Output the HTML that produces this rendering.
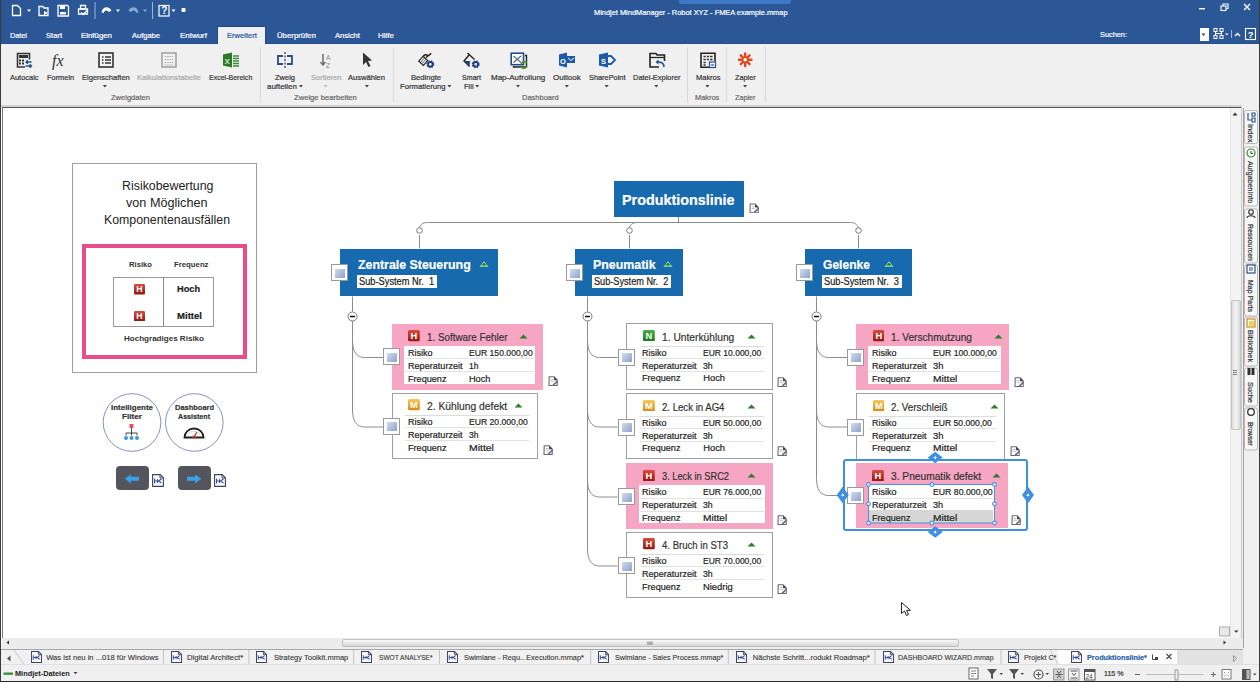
<!DOCTYPE html>
<html><head><meta charset="utf-8">
<style>
*{margin:0;padding:0;box-sizing:border-box}
html,body{width:1260px;height:682px;overflow:hidden;background:#fff}
body{position:relative;font-family:"Liberation Sans",sans-serif;color:#222}
.a{position:absolute}
.t{position:absolute;white-space:pre;line-height:1;transform-origin:0 0;-webkit-text-stroke:0.2px currentColor}
.v{position:absolute;white-space:nowrap;line-height:1;transform-origin:0 0;font-size:7.2px;color:#333;-webkit-text-stroke:0.2px #333}
</style></head><body>
<div class="a" style="left:0;top:0;width:1260px;height:44px;background:#2b5797"></div>
<div class="a" style="left:0;top:0;width:1px;height:682px;background:#3a3a3a;z-index:50"></div>
<div class="a" style="left:1259px;top:0;width:1px;height:682px;background:#3a3a3a;z-index:50"></div>
<div class="a" style="left:679px;top:0;width:112px;height:3.5px;background:#3d78c6;border-radius:0 0 2px 2px"></div>
<svg class="a" style="left:0;top:0" width="200" height="22">
<g fill="none" stroke="#fff" stroke-width="1.3">
<path d="M12.5 5.5h5l3 3v7h-8z"/>
<path d="M39 6.5h4l1 1.5h4v7.5h-9z"/>
<path d="M58 5.5h9.5l1 1v9.5h-10.5z"/>
<path d="M78.5 9h9v5h-9z"/><path d="M80.5 5.5h5v3.5h-5z"/>
</g>
<g fill="#fff">
<path d="M27 9.5h4l-2 2.5z"/>
<rect x="60" y="12" width="6" height="2.5"/>
<rect x="60" y="6" width="5" height="3"/>
<path d="M44 11l4 2-4 2z"/>
<rect x="94.5" y="2" width="1" height="17" fill="#9db5d9"/>
<path d="M101.5 12.5c1-6 7-7 10-2l-2.5 1.5c-2-2.5-4.5-2-5.5 1z"/>
<path d="M116 9.5h4l-2 2.5z"/>
<path d="M138.5 12.5c-1-6-7-7-10-2l2.5 1.5c2-2.5 4.5-2 5.5 1z" fill="#8aa7d6"/>
<path d="M143 9.5h4l-2 2.5z" fill="#8aa7d6"/>
<rect x="152" y="2" width="1" height="17" fill="#9db5d9"/>
<path d="M171.5 9.5h4l-2 2.5z"/>
<rect x="181.5" y="8" width="4" height="4" rx="1"/>
</g>
<path d="M81 12.5l2 2 4-4" stroke="#fff" stroke-width="1.3" fill="none"/>
<rect x="159" y="5.5" width="10" height="10.5" fill="none" stroke="#fff" stroke-width="1.2"/>
<text x="161.3" y="14.3" font-family="Liberation Sans" font-weight="bold" font-size="10" fill="#fff">?</text>
</svg>
<svg class="a" style="left:1190px;top:0" width="70" height="22">
<rect x="9" y="8" width="6" height="1.4" fill="#fff"/>
<g fill="none" stroke="#fff" stroke-width="1.1"><rect x="31" y="6" width="5" height="4.5"/><path d="M33 6v-2h5v4.5h-2"/>
<path d="M54 4l6 6M60 4l-6 6" stroke-width="1.4"/></g>
</svg>
<div class="a" style="left:0;top:42.5px;width:1260px;height:1.5px;background:#23508e"></div>
<div class="a" style="left:217px;top:25.5px;width:49px;height:19px;background:#f0f0f0;border:1px solid #1e4a88;border-bottom:none"></div>
<div class="a" style="left:1200px;top:28px;width:9px;height:13px;background:#fff"></div>
<svg class="a" style="left:1198px;top:24px" width="62" height="20">
<path d="M3.5 9.5h4l-2 2.5z" fill="#444"/>
<g fill="none" stroke="#fff" stroke-width="1"><rect x="16" y="4.5" width="3" height="3"/><rect x="22" y="4.5" width="3" height="3"/><rect x="16" y="11.5" width="3" height="3"/><rect x="22" y="11.5" width="3" height="3"/><path d="M17.5 7.5v4M23.5 7.5v4M17.5 9.5h6"/></g>
<path d="M27 9.5h3.5l-1.75 2z" fill="#fff"/>
<rect x="33" y="6" width="1" height="8" fill="#9db5d9"/>
<path d="M37 12l2.5-2.5 2.5 2.5" stroke="#fff" stroke-width="1.4" fill="none"/>
<rect x="47.5" y="4.5" width="10" height="11" fill="none" stroke="#fff" stroke-width="1.1"/>
<text x="49.8" y="13.5" font-family="Liberation Sans" font-weight="bold" font-size="9.5" fill="#fff">?</text>
</svg>

<div class="t" style="left:594.00px;top:8.90px;font-size:7.80px;color:#fff;transform:scaleX(0.9502);">Mindjet MindManager - Robot XYZ - FMEA example.mmap</div>
<div class="t" style="left:10.00px;top:31.57px;font-size:7.60px;color:#fff;transform:scaleX(0.9582);">Datei</div>
<div class="t" style="left:46.00px;top:31.57px;font-size:7.60px;color:#fff;">Start</div>
<div class="t" style="left:81.00px;top:31.57px;font-size:7.60px;color:#fff;transform:scaleX(1.0332);">Einfügen</div>
<div class="t" style="left:132.00px;top:31.57px;font-size:7.60px;color:#fff;transform:scaleX(0.9889);">Aufgabe</div>
<div class="t" style="left:180.00px;top:31.57px;font-size:7.60px;color:#fff;transform:scaleX(1.0479);">Entwurf</div>
<div class="t" style="left:277.00px;top:31.57px;font-size:7.60px;color:#fff;transform:scaleX(1.0257);">Überprüfen</div>
<div class="t" style="left:335.00px;top:31.57px;font-size:7.60px;color:#fff;">Ansicht</div>
<div class="t" style="left:378.00px;top:31.57px;font-size:7.60px;color:#fff;transform:scaleX(1.0524);">Hilfe</div>
<div class="t" style="left:227.00px;top:31.57px;font-size:7.60px;color:#2b5797;">Erweitert</div>
<div class="t" style="left:1100.00px;top:30.57px;font-size:7.60px;color:#fff;transform:scaleX(0.9682);">Suchen:</div>
<div class="a" style="left:0;top:44px;width:1260px;height:61px;background:#f0f0f0"></div>
<div class="a" style="left:0;top:105px;width:1260px;height:2px;background:#d2d2d2"></div>

<div class="a" style="left:259.5px;top:47px;width:1px;height:56px;background:#dadada"></div>
<div class="a" style="left:392.5px;top:47px;width:1px;height:56px;background:#dadada"></div>
<div class="a" style="left:687px;top:47px;width:1px;height:56px;background:#dadada"></div>
<div class="a" style="left:725.5px;top:47px;width:1px;height:56px;background:#dadada"></div>
<div class="a" style="left:764.5px;top:47px;width:1px;height:56px;background:#dadada"></div>
<div class="t" style="left:10.00px;top:74.20px;font-size:7.80px;color:#333;transform:scaleX(0.9527);">Autocalc</div>
<div class="t" style="left:46.80px;top:74.20px;font-size:7.80px;color:#333;transform:scaleX(0.9508);">Formeln</div>
<div class="t" style="left:81.60px;top:74.20px;font-size:7.80px;color:#333;transform:scaleX(0.9669);">Eigenschaften</div>
<div class="t" style="left:137.30px;top:74.20px;font-size:7.80px;color:#a8a8a8;transform:scaleX(0.9793);">Kalkulationstabelle</div>
<div class="t" style="left:208.80px;top:74.20px;font-size:7.80px;color:#333;transform:scaleX(0.8999);">Excel-Bereich</div>
<div class="t" style="left:275.00px;top:74.20px;font-size:7.80px;color:#333;transform:scaleX(0.9612);">Zweig</div>
<div class="t" style="left:266.90px;top:82.70px;font-size:7.80px;color:#333;transform:scaleX(1.0105);">aufteilen</div>
<div class="t" style="left:310.60px;top:74.20px;font-size:7.80px;color:#a8a8a8;transform:scaleX(0.9605);">Sortieren</div>
<div class="t" style="left:348.30px;top:74.20px;font-size:7.80px;color:#333;transform:scaleX(0.9696);">Auswählen</div>
<div class="t" style="left:410.90px;top:74.20px;font-size:7.80px;color:#333;transform:scaleX(0.9775);">Bedingte</div>
<div class="t" style="left:400.00px;top:82.70px;font-size:7.80px;color:#333;transform:scaleX(0.9831);">Formatierung</div>
<div class="t" style="left:462.20px;top:74.20px;font-size:7.80px;color:#333;transform:scaleX(0.9085);">Smart</div>
<div class="t" style="left:463.70px;top:82.70px;font-size:7.80px;color:#333;transform:scaleX(0.9635);">Fill</div>
<div class="t" style="left:491.10px;top:74.20px;font-size:7.80px;color:#333;transform:scaleX(1.0266);">Map-Aufrollung</div>
<div class="t" style="left:552.90px;top:74.20px;font-size:7.80px;color:#333;transform:scaleX(1.0379);">Outlook</div>
<div class="t" style="left:588.70px;top:74.20px;font-size:7.80px;color:#333;transform:scaleX(0.9458);">SharePoint</div>
<div class="t" style="left:632.90px;top:74.20px;font-size:7.80px;color:#333;transform:scaleX(0.9549);">Datei-Explorer</div>
<div class="t" style="left:695.70px;top:74.20px;font-size:7.80px;color:#333;transform:scaleX(0.9581);">Makros</div>
<div class="t" style="left:735.10px;top:74.20px;font-size:7.80px;color:#333;transform:scaleX(0.9363);">Zapier</div>
<div class="t" style="left:111.00px;top:94.40px;font-size:7.80px;color:#666;transform:scaleX(0.9671);">Zweigdaten</div>
<div class="t" style="left:294.40px;top:94.40px;font-size:7.80px;color:#666;transform:scaleX(0.9786);">Zweige bearbeiten</div>
<div class="t" style="left:521.70px;top:94.40px;font-size:7.80px;color:#666;transform:scaleX(0.9618);">Dashboard</div>
<div class="t" style="left:694.90px;top:94.40px;font-size:7.80px;color:#666;transform:scaleX(0.9464);">Makros</div>
<div class="t" style="left:735.00px;top:94.40px;font-size:7.80px;color:#666;transform:scaleX(0.9272);">Zapier</div>
<svg class="a" style="left:0;top:0" width="800" height="110"><path d="M102.9 85.0h4l-2 2.5z" fill="#444"/><path d="M298.9 85.0h4l-2 2.5z" fill="#444"/><path d="M323.6 85.0h4l-2 2.5z" fill="#bbb"/><path d="M364.9 85.0h4l-2 2.5z" fill="#444"/><path d="M447.4 85.0h4l-2 2.5z" fill="#444"/><path d="M475.2 85.0h4l-2 2.5z" fill="#444"/><path d="M516.0 85.0h4l-2 2.5z" fill="#444"/><path d="M564.8 85.0h4l-2 2.5z" fill="#444"/><path d="M604.6 85.0h4l-2 2.5z" fill="#444"/><path d="M654.3 85.0h4l-2 2.5z" fill="#444"/><path d="M705.4 85.0h4l-2 2.5z" fill="#444"/><path d="M743.1 85.0h4l-2 2.5z" fill="#444"/>
<g fill="none" stroke="#333" stroke-width="1.6">
<path d="M29.5 59.5V53.5H17.5V67h7.5"/>
<rect x="99" y="53" width="14" height="14"/>
<path d="M102 57h1.5M105 57h6M102 60h1.5M105 60h6M102 63h1.5M105 63h6" stroke-width="1.4"/>
</g>
<rect x="19" y="55" width="9" height="3" fill="#333"/>
<g fill="#333"><rect x="19" y="59.5" width="2" height="2"/><rect x="22" y="59.5" width="2" height="2"/><rect x="19" y="62.5" width="2" height="2"/><rect x="22" y="62.5" width="2" height="2"/></g>
<path d="M26 62h5.5M27.8 60.2l-1.8 1.8 1.8 1.8M25.5 66h6M29.7 64.2l1.8 1.8-1.8 1.8" stroke="#1f4f8f" stroke-width="1.4" fill="none"/>
<text x="52" y="66" font-family="Liberation Serif" font-style="italic" font-size="16" fill="#333">fx</text>
<rect x="162" y="53" width="14" height="14" fill="none" stroke="#999" stroke-width="1.4"/>
<path d="M165 56.5h8M165 59.5h8M165 62.5h8M165 65h8" stroke="#aaa" stroke-width="1" stroke-dasharray="1.3 1"/>
<path d="M223 54.5l9-2v15l-9-2z" fill="#2a7a2a"/>
<text x="224.5" y="64" font-family="Liberation Sans" font-weight="bold" font-size="8" fill="#cde8c0">X</text>
<path d="M233 56h6M233 58.5h6M233 61h6M233 63.5h6M233 66h6" stroke="#3a8a3a" stroke-width="1.6"/>
<g fill="none" stroke="#2b4f8a" stroke-width="1.8"><path d="M283 56h-5v8h5M287 56h5v8h-5"/></g>
<path d="M285 52v17" stroke="#333" stroke-width="1.2" stroke-dasharray="2 1.5"/>
<path d="M323 54v11M320.5 62l2.5 3 2.5-3" stroke="#777" stroke-width="1.6" fill="none"/>
<text x="326" y="60" font-family="Liberation Sans" font-size="6.5" fill="#888">A</text>
<text x="326" y="67.5" font-family="Liberation Sans" font-size="6.5" fill="#888">Z</text>
<path d="M363 52.5l9 8-4 .5 2.5 5-2 1-2.5-5-3 3z" fill="#333"/>
<path d="M418.8 61.2l4.3-4.8 4.6 4.2-4.3 4.8z" fill="#fff" stroke="#222" stroke-width="1.2"/>
<path d="M420.3 62.5l4.3-4.6M421.8 63.8l4.3-4.6" stroke="#222" stroke-width=".8"/>
<path d="M423.2 56.6c1-2 2.5-2.4 4.5-1.2M426 57.5l5.2-4.2" stroke="#222" stroke-width="1.5" fill="none"/>
<circle cx="430.3" cy="64.3" r="2.3" fill="none" stroke="#1f3f7f" stroke-width="1.8"/>
<circle cx="430.3" cy="64.3" r="3.4" fill="none" stroke="#1f3f7f" stroke-width="1.2" stroke-dasharray="1.4 1.3"/>
<path d="M467.5 53l7 6.5M469 55l-5 6 5.5 5.5" stroke="#222" stroke-width="1.4" fill="none"/>
<path d="M464.5 61h5.5l-.5 5.5z" fill="#1f3f7f"/>
<circle cx="475.7" cy="64.3" r="2.3" fill="none" stroke="#1f3f7f" stroke-width="1.8"/>
<circle cx="475.7" cy="64.3" r="3.4" fill="none" stroke="#1f3f7f" stroke-width="1.2" stroke-dasharray="1.4 1.3"/>
<path d="M525 55.5h1.5v11.5h-13v-1" stroke="#222" stroke-width="1.4" fill="none"/>
<rect x="511.2" y="53.2" width="12.3" height="11.5" fill="#fff" stroke="#1f4f8f" stroke-width="1.6"/>
<path d="M513.5 56l7.5 6.5M521 56l-7.5 6.5" stroke="#5a6a90" stroke-width="1.2"/>
<path d="M521.2 64.2a3 3 0 0 1 5.5-1.2M526.8 65.8a3 3 0 0 1-5.5 1.2" stroke="#4a9a30" stroke-width="1.6" fill="none"/>
<path d="M559 54.5l8-2v15l-8-2z" fill="#1e5aa8"/>
<rect x="567" y="56" width="8" height="7" fill="#1e5aa8"/>
<text x="560" y="63.5" font-family="Liberation Sans" font-weight="bold" font-size="7.5" fill="#fff">O</text>
<path d="M568 58l3 2.5 3-2.5" stroke="#fff" stroke-width="1" fill="none"/>
<path d="M599 54.5l9-2v15l-9-2z" fill="#1e5aa8"/>
<path d="M608 56h3l4 4-4 4h-3" stroke="#1e5aa8" stroke-width="1.8" fill="none"/>
<text x="601" y="63.5" font-family="Liberation Sans" font-weight="bold" font-size="7.5" fill="#fff">S</text>
<path d="M659 67H650V53.5h6l1 1.5h7.5v6" stroke="#222" stroke-width="1.6" fill="none"/>
<path d="M650 57.5h14.5" stroke="#222" stroke-width="1.3"/>
<path d="M664 67c0-3-2-5-6-5" stroke="#1f4f8f" stroke-width="1.7" fill="none"/>
<path d="M655.5 62l3-2.5v5z" fill="#1f4f8f"/>
<path d="M709 67.2H701V53.3h14v8" stroke="#222" stroke-width="1.6" fill="none"/>
<path d="M703.5 56.5h2.2M706.8 56.5h2.2M710 56.5h2.5M703.5 59.5h2.2M706.8 59.5h2.2M710 59.5h2.5M703.5 62.5h2.2M703.5 65h2.2" stroke="#333" stroke-width="1.4"/>
<rect x="709.5" y="62" width="6" height="5.5" fill="#fff" stroke="#1f4f8f" stroke-width="1.2"/>
<path d="M711 65h3" stroke="#1f4f8f" stroke-width="1.2"/>
<g stroke="#e8441c" stroke-width="2.4" stroke-linecap="round"><path d="M745.2 53.5v12.5M739 59.7h12.5M740.8 55.3l8.8 8.8M749.6 55.3l-8.8 8.8"/></g>
<circle cx="745.2" cy="59.7" r="1.8" fill="#fff"/>
</svg>
<div class="a" style="left:2px;top:107px;width:1239px;height:531px;background:#fff;border-top:1px solid #555;border-left:1px solid #777"></div>

<div class="a" style="left:71.8px;top:162.8px;width:185px;height:210.5px;border:1px solid #a0a0a0;background:#fff"></div>
<div class="a" style="left:82px;top:244px;width:165px;height:115px;border:4.2px solid #e64d8a"></div>
<div class="a" style="left:112.8px;top:276.8px;width:101.5px;height:50px;border:1px solid #999"></div>
<div class="a" style="left:163px;top:277px;width:1px;height:49px;background:#888"></div>

<div class="t" style="left:121.50px;top:180.02px;font-size:12.50px;color:#222;transform:scaleX(0.9902);-webkit-text-stroke:0;">Risikobewertung</div>
<div class="t" style="left:125.50px;top:196.82px;font-size:12.50px;color:#222;transform:scaleX(1.0111);-webkit-text-stroke:0;">von Möglichen</div>
<div class="t" style="left:103.50px;top:213.52px;font-size:12.50px;color:#222;transform:scaleX(0.9853);-webkit-text-stroke:0;">Komponentenausfällen</div>
<div class="t" style="left:128.50px;top:260.73px;font-size:8.00px;color:#333;font-weight:bold;transform:scaleX(0.9580);-webkit-text-stroke:0;">Risiko</div>
<div class="t" style="left:173.50px;top:260.73px;font-size:8.00px;color:#333;font-weight:bold;transform:scaleX(0.9702);-webkit-text-stroke:0;">Frequenz</div>
<div class="t" style="left:176.50px;top:284.88px;font-size:9.00px;color:#222;font-weight:bold;transform:scaleX(1.0222);">Hoch</div>
<div class="t" style="left:176.50px;top:311.88px;font-size:9.00px;color:#222;font-weight:bold;transform:scaleX(1.0639);">Mittel</div>
<div class="t" style="left:123.50px;top:334.73px;font-size:8.00px;color:#333;font-weight:bold;transform:scaleX(1.0054);-webkit-text-stroke:0;">Hochgradiges Risiko</div>
<svg class="a" style="left:0;top:0" width="0" height="0"><defs>
<linearGradient id="gH" x1="0" y1="0" x2="0" y2="1"><stop offset="0" stop-color="#de4a3c"/><stop offset="1" stop-color="#8e1a12"/></linearGradient>
<linearGradient id="gM" x1="0" y1="0" x2="0" y2="1"><stop offset="0" stop-color="#f7c85a"/><stop offset="1" stop-color="#d98a12"/></linearGradient>
<linearGradient id="gN" x1="0" y1="0" x2="0" y2="1"><stop offset="0" stop-color="#46b046"/><stop offset="1" stop-color="#1b7a1b"/></linearGradient>
<linearGradient id="gImg" x1="0" y1="0" x2="1" y2="1"><stop offset="0" stop-color="#c8d4ec"/><stop offset="1" stop-color="#8ea2c8"/></linearGradient>
</defs></svg>
<svg class="a" style="left:134.0px;top:284.0px" width="11.0" height="10.5" viewBox="0 0 12 12" preserveAspectRatio="none"><rect x="0" y="0" width="12" height="12" rx="1.5" fill="url(#gH)"/><text x="6" y="9.6" text-anchor="middle" font-family="Liberation Sans" font-weight="bold" font-size="9.5" fill="#fff">H</text></svg>
<svg class="a" style="left:134.0px;top:310.5px" width="11.0" height="10.5" viewBox="0 0 12 12" preserveAspectRatio="none"><rect x="0" y="0" width="12" height="12" rx="1.5" fill="url(#gH)"/><text x="6" y="9.6" text-anchor="middle" font-family="Liberation Sans" font-weight="bold" font-size="9.5" fill="#fff">H</text></svg>
<svg class="a" style="left:95px;top:385px" width="140" height="115">
<circle cx="37" cy="37.5" r="28.8" fill="#fff" stroke="#8a8fc0" stroke-width="1"/>
<circle cx="99.3" cy="37.5" r="28.8" fill="#fff" stroke="#8a8fc0" stroke-width="1"/>
<rect x="34.5" y="39" width="4" height="4" fill="#e0505a"/>
<path d="M36.5 43v5M31 48h11M31 48v2.5M36.5 48v2.5M42 48v2.5" stroke="#333" stroke-width="0.9" fill="none"/>
<circle cx="31" cy="53" r="2" fill="#3a9ad8"/><circle cx="36.5" cy="53" r="2" fill="#3a9ad8"/><circle cx="42" cy="53" r="2" fill="#3a9ad8"/>
<path d="M89.5 52.5a9.5 9 0 0 1 19 0z" fill="#fff" stroke="#222" stroke-width="1.8"/>
<path d="M99 52l3-5" stroke="#c0392b" stroke-width="1.4"/><circle cx="99" cy="52" r="1.6" fill="#c0392b"/>
<path d="M92.5 50.5a7 6.5 0 0 1 13 0" fill="none" stroke="#ccc" stroke-width="0.8"/>
</svg>
<div class="t" style="left:110.50px;top:403.73px;font-size:8.00px;color:#333;font-weight:bold;transform:scaleX(0.9946);">Intelligente</div>
<div class="t" style="left:121.50px;top:413.23px;font-size:8.00px;color:#333;font-weight:bold;transform:scaleX(1.0226);">Filter</div>
<div class="t" style="left:174.50px;top:403.73px;font-size:8.00px;color:#333;font-weight:bold;transform:scaleX(0.9333);">Dashboard</div>
<div class="t" style="left:178.00px;top:413.23px;font-size:8.00px;color:#333;font-weight:bold;transform:scaleX(0.8886);">Assistent</div>
<div class="a" style="left:116px;top:465.5px;width:32.5px;height:24.5px;background:#54545c;border-radius:4px"></div>
<div class="a" style="left:178px;top:465.5px;width:32.5px;height:24.5px;background:#54545c;border-radius:4px"></div>
<svg class="a" style="left:116px;top:465.5px" width="100" height="25">
<path d="M8.7 12.8l6.3-4.6v2.6h8v4h-8v2.6z" fill="#3aa0e8"/>
<path d="M85.3 12.8l-6.3-4.6v2.6h-8v4h8v2.6z" fill="#3aa0e8"/>
</svg>
<svg class="a" style="left:152.0px;top:473.5px" width="12" height="13" viewBox="0 0 12 13"><path d="M.6 .6h7.6l3.2 3.2v8.6h-10.8z" fill="#fff" stroke="#3c4260" stroke-width="1.1"/><path d="M8 .6v3.4h3.4" fill="none" stroke="#3c4260" stroke-width="1"/><path d="M2.5 4.5v5M2.5 7h3M5.5 5v4M9.5 5l-3 2 3 2" fill="none" stroke="#3a4aa0" stroke-width="1.1"/></svg>
<svg class="a" style="left:214.0px;top:473.5px" width="12" height="13" viewBox="0 0 12 13"><path d="M.6 .6h7.6l3.2 3.2v8.6h-10.8z" fill="#fff" stroke="#3c4260" stroke-width="1.1"/><path d="M8 .6v3.4h3.4" fill="none" stroke="#3c4260" stroke-width="1"/><path d="M2.5 4.5v5M2.5 7h3M5.5 5v4M9.5 5l-3 2 3 2" fill="none" stroke="#3a4aa0" stroke-width="1.1"/></svg>
<svg class="a" style="left:0;top:0" width="1260" height="640">
<g fill="none" stroke="#8c8c8c" stroke-width="1">
<path d="M678.5 217v5.5"/>
<path d="M419.5 228V230M419.5 235v13.5"/>
<path d="M427.5 222.5h423c5 0 8 3 8 7"/>
<path d="M427.5 222.5c-5 0-8 3-8 5.5"/>
<path d="M629.5 228v2M629.5 235v13.5"/>
<path d="M637 222.5c-5 0-7.5 3-7.5 5.5"/>
<path d="M858.5 235v13.5"/>
<path d="M352.5 296.5v15M352.5 320.5V410.0c0 11 4 17 12 17H383.0M352.5 340.5c0 11 4 17 12 17H383.0"/>
<path d="M587.5 296.5v15M587.5 320.5V549.0c0 11 4 17 12 17H617.6M587.5 340.5c0 11 4 17 12 17H617.6M587.5 410.0c0 11 4 17 12 17H617.6M587.5 480.0c0 11 4 17 12 17H617.6"/>
<path d="M816.5 296.5v15M816.5 320.5V478.5c0 11 4 17 12 17H847.3M816.5 340.5c0 11 4 17 12 17H847.3M816.5 410.0c0 11 4 17 12 17H847.3"/>
</g>
<g fill="#fff" stroke="#777" stroke-width="1">
<circle cx="419.5" cy="230.5" r="2.8"/><circle cx="629.5" cy="230.5" r="2.8"/><circle cx="858.5" cy="230.5" r="2.8"/>
<circle cx="352.5" cy="316.5" r="4.5"/><circle cx="587.5" cy="316.5" r="4.5"/><circle cx="816.5" cy="316.5" r="4.5"/>
</g>
<path d="M350 316.5h5M585 316.5h5M814 316.5h5" stroke="#111" stroke-width="1.4"/>
</svg>
<div class="a" style="left:614px;top:181px;width:130px;height:36px;background:#176aad"></div>
<div class="t" style="left:622.40px;top:191.70px;font-size:15.00px;color:#fff;font-weight:bold;transform:scaleX(0.9565);">Produktionslinie</div>
<svg class="a" style="left:748.5px;top:202.5px" width="11" height="10.5" viewBox="0 0 11 10"><path d="M1.2 .8h5l3 3.2v5.5h-8.2z" fill="#fff" stroke="#6a6a6a" stroke-width="1.1"/><path d="M6 .8l3.5 3.5h-3.5z" fill="#444"/><path d="M2.8 3.5h2.5M2.8 5.3h3" stroke="#aaa" stroke-width=".8"/><path d="M5.2 9.2l4.5-4.3" stroke="#6a7090" stroke-width="1.6"/></svg>
<div class="a" style="left:340.2px;top:248.6px;width:157.8px;height:47.6px;background:#176aad"></div>
<div class="t" style="left:358.00px;top:258.00px;font-size:13.00px;color:#fff;font-weight:bold;transform:scaleX(0.9513);">Zentrale Steuerung</div>
<svg class="a" style="left:478.5px;top:259px" width="11" height="9"><path d="M.5 8L5 2.2 9.5 8z" fill="#b8ecc0"/><path d="M2.2 6.5L5 3.5 7.8 6.5z" fill="#1a7a1a"/><path d="M1.5 7.5h7" stroke="#7cc87c" stroke-width="1"/></svg>
<div class="a" style="left:356.9px;top:275.2px;width:80.2px;height:12.4px;background:#fff"></div>
<div class="t" style="left:358.90px;top:276.74px;font-size:10.00px;color:#222;transform:scaleX(0.9268);">Sub-System Nr.  1</div>
<div class="a" style="left:331.2px;top:264.2px;width:17px;height:17.2px;background:#fff;border:1px solid #999"></div>
<div class="a" style="left:335.2px;top:268.7px;width:10px;height:9px;background:linear-gradient(135deg,#d0dcf0,#8ea2c8)"></div>
<div class="a" style="left:575.2px;top:248.6px;width:107.7px;height:47.6px;background:#176aad"></div>
<div class="t" style="left:593.00px;top:258.00px;font-size:13.00px;color:#fff;font-weight:bold;transform:scaleX(0.9537);">Pneumatik</div>
<svg class="a" style="left:663.0px;top:259px" width="11" height="9"><path d="M.5 8L5 2.2 9.5 8z" fill="#b8ecc0"/><path d="M2.2 6.5L5 3.5 7.8 6.5z" fill="#1a7a1a"/><path d="M1.5 7.5h7" stroke="#7cc87c" stroke-width="1"/></svg>
<div class="a" style="left:591.9px;top:275.2px;width:79.3px;height:12.4px;background:#fff"></div>
<div class="t" style="left:593.90px;top:276.74px;font-size:10.00px;color:#222;transform:scaleX(0.9157);">Sub-System Nr.  2</div>
<div class="a" style="left:566.2px;top:264.2px;width:17px;height:17.2px;background:#fff;border:1px solid #999"></div>
<div class="a" style="left:570.2px;top:268.7px;width:10px;height:9px;background:linear-gradient(135deg,#d0dcf0,#8ea2c8)"></div>
<div class="a" style="left:804.8px;top:248.6px;width:106.8px;height:47.6px;background:#176aad"></div>
<div class="t" style="left:822.60px;top:258.00px;font-size:13.00px;color:#fff;font-weight:bold;transform:scaleX(0.9291);">Gelenke</div>
<svg class="a" style="left:883.5px;top:259px" width="11" height="9"><path d="M.5 8L5 2.2 9.5 8z" fill="#b8ecc0"/><path d="M2.2 6.5L5 3.5 7.8 6.5z" fill="#1a7a1a"/><path d="M1.5 7.5h7" stroke="#7cc87c" stroke-width="1"/></svg>
<div class="a" style="left:821.5px;top:275.2px;width:80.0px;height:12.4px;background:#fff"></div>
<div class="t" style="left:823.50px;top:276.74px;font-size:10.00px;color:#222;transform:scaleX(0.9244);">Sub-System Nr.  3</div>
<div class="a" style="left:795.6px;top:264.2px;width:17px;height:17.2px;background:#fff;border:1px solid #999"></div>
<div class="a" style="left:799.6px;top:268.7px;width:10px;height:9px;background:linear-gradient(135deg,#d0dcf0,#8ea2c8)"></div>
<div class="a" style="left:391.6px;top:323.6px;width:151.4px;height:66.6px;background:#f6a5c2;border:none"></div>
<svg class="a" style="left:408.4px;top:330.4px" width="11.8" height="11.3" viewBox="0 0 12 12" preserveAspectRatio="none"><rect x="0" y="0" width="12" height="12" rx="1.5" fill="url(#gH)"/><text x="6" y="9.6" text-anchor="middle" font-family="Liberation Sans" font-weight="bold" font-size="9.5" fill="#fff">H</text></svg>
<div class="t" style="left:426.80px;top:332.06px;font-size:10.80px;color:#333;transform:scaleX(0.9123);">1. Software Fehler</div>
<svg class="a" style="left:518.5px;top:333.1px" width="9" height="7"><path d="M.5 5.5L4.5 1.5 8.5 5.5z" fill="#2e7d2e"/></svg>
<div class="a" style="left:403.8px;top:345.6px;width:130.9px;height:38.4px;background:#fff"></div>
<div class="a" style="left:404.8px;top:358.4px;width:128.9px;height:1px;background:#e2e2e2"></div>
<div class="a" style="left:404.8px;top:371.2px;width:128.9px;height:1px;background:#e2e2e2"></div>
<div class="t" style="left:407.60px;top:349.03px;font-size:9.30px;color:#222;transform:scaleX(0.9676);">Risiko</div>
<div class="t" style="left:468.60px;top:349.03px;font-size:9.30px;color:#222;transform:scaleX(0.9263);">EUR 150.000,00</div>
<div class="t" style="left:407.60px;top:361.83px;font-size:9.30px;color:#222;transform:scaleX(0.9780);">Reperaturzeit</div>
<div class="t" style="left:468.60px;top:361.83px;font-size:9.30px;color:#222;transform:scaleX(0.9087);">1h</div>
<div class="t" style="left:407.60px;top:374.63px;font-size:9.30px;color:#222;transform:scaleX(0.9799);">Frequenz</div>
<div class="t" style="left:468.60px;top:374.63px;font-size:9.30px;color:#222;transform:scaleX(0.9857);">Hoch</div>
<svg class="a" style="left:547.6px;top:376.4px" width="11" height="10" viewBox="0 0 11 10"><path d="M1.2 .8h5l3 3.2v5.5h-8.2z" fill="#fff" stroke="#6a6a6a" stroke-width="1.1"/><path d="M6 .8l3.5 3.5h-3.5z" fill="#444"/><path d="M2.8 3.5h2.5M2.8 5.3h3" stroke="#aaa" stroke-width=".8"/><path d="M5.2 9.2l4.5-4.3" stroke="#6a7090" stroke-width="1.6"/></svg>
<div class="a" style="left:383.0px;top:348.3px;width:17px;height:17.2px;background:#fff;border:1px solid #999"></div>
<div class="a" style="left:387.0px;top:352.8px;width:10px;height:9px;background:linear-gradient(135deg,#d0dcf0,#8ea2c8)"></div>
<div class="a" style="left:391.6px;top:392.6px;width:146.6px;height:66.8px;background:#fff;border:1px solid #a0a0a0"></div>
<svg class="a" style="left:408.4px;top:399.4px" width="11.8" height="11.3" viewBox="0 0 12 12" preserveAspectRatio="none"><rect x="0" y="0" width="12" height="12" rx="1.5" fill="url(#gM)"/><text x="6" y="9.6" text-anchor="middle" font-family="Liberation Sans" font-weight="bold" font-size="9.5" fill="#fff">M</text></svg>
<div class="t" style="left:426.80px;top:401.06px;font-size:10.80px;color:#333;transform:scaleX(0.9540);">2. Kühlung defekt</div>
<svg class="a" style="left:513.5px;top:402.1px" width="9" height="7"><path d="M.5 5.5L4.5 1.5 8.5 5.5z" fill="#2e7d2e"/></svg>
<div class="a" style="left:404.8px;top:415.1px;width:124.1px;height:1px;background:#ddd"></div>
<div class="a" style="left:404.8px;top:427.4px;width:124.1px;height:1px;background:#e2e2e2"></div>
<div class="a" style="left:404.8px;top:440.2px;width:124.1px;height:1px;background:#e2e2e2"></div>
<div class="t" style="left:407.60px;top:418.03px;font-size:9.30px;color:#222;transform:scaleX(0.9676);">Risiko</div>
<div class="t" style="left:468.60px;top:418.03px;font-size:9.30px;color:#222;transform:scaleX(0.9262);">EUR 20.000,00</div>
<div class="t" style="left:407.60px;top:430.83px;font-size:9.30px;color:#222;transform:scaleX(0.9780);">Reperaturzeit</div>
<div class="t" style="left:468.60px;top:430.83px;font-size:9.30px;color:#222;transform:scaleX(0.9087);">3h</div>
<div class="t" style="left:407.60px;top:443.63px;font-size:9.30px;color:#222;transform:scaleX(0.9799);">Frequenz</div>
<div class="t" style="left:468.60px;top:443.63px;font-size:9.30px;color:#222;transform:scaleX(1.1207);">Mittel</div>
<svg class="a" style="left:543.0px;top:444.8px" width="11" height="10" viewBox="0 0 11 10"><path d="M1.2 .8h5l3 3.2v5.5h-8.2z" fill="#fff" stroke="#6a6a6a" stroke-width="1.1"/><path d="M6 .8l3.5 3.5h-3.5z" fill="#444"/><path d="M2.8 3.5h2.5M2.8 5.3h3" stroke="#aaa" stroke-width=".8"/><path d="M5.2 9.2l4.5-4.3" stroke="#6a7090" stroke-width="1.6"/></svg>
<div class="a" style="left:383.0px;top:417.8px;width:17px;height:17.2px;background:#fff;border:1px solid #999"></div>
<div class="a" style="left:387.0px;top:422.3px;width:10px;height:9px;background:linear-gradient(135deg,#d0dcf0,#8ea2c8)"></div>
<div class="a" style="left:626.3px;top:323.4px;width:146.7px;height:67.1px;background:#fff;border:1px solid #a0a0a0"></div>
<svg class="a" style="left:643.1px;top:330.2px" width="11.8" height="11.3" viewBox="0 0 12 12" preserveAspectRatio="none"><rect x="0" y="0" width="12" height="12" rx="1.5" fill="url(#gN)"/><text x="6" y="9.6" text-anchor="middle" font-family="Liberation Sans" font-weight="bold" font-size="9.5" fill="#fff">N</text></svg>
<div class="t" style="left:661.50px;top:331.86px;font-size:10.80px;color:#333;transform:scaleX(0.9482);">1. Unterkühlung</div>
<svg class="a" style="left:747.0px;top:332.9px" width="9" height="7"><path d="M.5 5.5L4.5 1.5 8.5 5.5z" fill="#2e7d2e"/></svg>
<div class="a" style="left:639.5px;top:345.9px;width:124.2px;height:1px;background:#ddd"></div>
<div class="a" style="left:639.5px;top:358.2px;width:124.2px;height:1px;background:#e2e2e2"></div>
<div class="a" style="left:639.5px;top:371.0px;width:124.2px;height:1px;background:#e2e2e2"></div>
<div class="t" style="left:642.30px;top:348.83px;font-size:9.30px;color:#222;transform:scaleX(0.9676);">Risiko</div>
<div class="t" style="left:703.30px;top:348.83px;font-size:9.30px;color:#222;transform:scaleX(0.9152);">EUR 10.000,00</div>
<div class="t" style="left:642.30px;top:361.63px;font-size:9.30px;color:#222;transform:scaleX(0.9780);">Reperaturzeit</div>
<div class="t" style="left:703.30px;top:361.63px;font-size:9.30px;color:#222;transform:scaleX(0.9377);">3h</div>
<div class="t" style="left:642.30px;top:374.43px;font-size:9.30px;color:#222;transform:scaleX(0.9799);">Frequenz</div>
<div class="t" style="left:703.30px;top:374.43px;font-size:9.30px;color:#222;">Hoch</div>
<svg class="a" style="left:776.9px;top:376.8px" width="11" height="10" viewBox="0 0 11 10"><path d="M1.2 .8h5l3 3.2v5.5h-8.2z" fill="#fff" stroke="#6a6a6a" stroke-width="1.1"/><path d="M6 .8l3.5 3.5h-3.5z" fill="#444"/><path d="M2.8 3.5h2.5M2.8 5.3h3" stroke="#aaa" stroke-width=".8"/><path d="M5.2 9.2l4.5-4.3" stroke="#6a7090" stroke-width="1.6"/></svg>
<div class="a" style="left:617.6px;top:348.5px;width:17px;height:17.2px;background:#fff;border:1px solid #999"></div>
<div class="a" style="left:621.6px;top:353.0px;width:10px;height:9px;background:linear-gradient(135deg,#d0dcf0,#8ea2c8)"></div>
<div class="a" style="left:626.3px;top:393.3px;width:146.7px;height:66.1px;background:#fff;border:1px solid #a0a0a0"></div>
<svg class="a" style="left:643.1px;top:400.1px" width="11.8" height="11.3" viewBox="0 0 12 12" preserveAspectRatio="none"><rect x="0" y="0" width="12" height="12" rx="1.5" fill="url(#gM)"/><text x="6" y="9.6" text-anchor="middle" font-family="Liberation Sans" font-weight="bold" font-size="9.5" fill="#fff">M</text></svg>
<div class="t" style="left:661.50px;top:401.76px;font-size:10.80px;color:#333;transform:scaleX(0.8894);">2. Leck in AG4</div>
<svg class="a" style="left:747.0px;top:402.8px" width="9" height="7"><path d="M.5 5.5L4.5 1.5 8.5 5.5z" fill="#2e7d2e"/></svg>
<div class="a" style="left:639.5px;top:415.8px;width:124.2px;height:1px;background:#ddd"></div>
<div class="a" style="left:639.5px;top:428.1px;width:124.2px;height:1px;background:#e2e2e2"></div>
<div class="a" style="left:639.5px;top:440.9px;width:124.2px;height:1px;background:#e2e2e2"></div>
<div class="t" style="left:642.30px;top:418.73px;font-size:9.30px;color:#222;transform:scaleX(0.9676);">Risiko</div>
<div class="t" style="left:703.30px;top:418.73px;font-size:9.30px;color:#222;transform:scaleX(0.9152);">EUR 50.000,00</div>
<div class="t" style="left:642.30px;top:431.53px;font-size:9.30px;color:#222;transform:scaleX(0.9780);">Reperaturzeit</div>
<div class="t" style="left:703.30px;top:431.53px;font-size:9.30px;color:#222;transform:scaleX(0.9377);">3h</div>
<div class="t" style="left:642.30px;top:444.33px;font-size:9.30px;color:#222;transform:scaleX(0.9799);">Frequenz</div>
<div class="t" style="left:703.30px;top:444.33px;font-size:9.30px;color:#222;">Hoch</div>
<svg class="a" style="left:776.9px;top:445.5px" width="11" height="10" viewBox="0 0 11 10"><path d="M1.2 .8h5l3 3.2v5.5h-8.2z" fill="#fff" stroke="#6a6a6a" stroke-width="1.1"/><path d="M6 .8l3.5 3.5h-3.5z" fill="#444"/><path d="M2.8 3.5h2.5M2.8 5.3h3" stroke="#aaa" stroke-width=".8"/><path d="M5.2 9.2l4.5-4.3" stroke="#6a7090" stroke-width="1.6"/></svg>
<div class="a" style="left:617.6px;top:418.5px;width:17px;height:17.2px;background:#fff;border:1px solid #999"></div>
<div class="a" style="left:621.6px;top:423.0px;width:10px;height:9px;background:linear-gradient(135deg,#d0dcf0,#8ea2c8)"></div>
<div class="a" style="left:626.3px;top:462.9px;width:146.7px;height:66.2px;background:#f6a5c2;border:none"></div>
<svg class="a" style="left:643.1px;top:469.7px" width="11.8" height="11.3" viewBox="0 0 12 12" preserveAspectRatio="none"><rect x="0" y="0" width="12" height="12" rx="1.5" fill="url(#gH)"/><text x="6" y="9.6" text-anchor="middle" font-family="Liberation Sans" font-weight="bold" font-size="9.5" fill="#fff">H</text></svg>
<div class="t" style="left:661.50px;top:471.36px;font-size:10.80px;color:#333;transform:scaleX(0.8586);">3. Leck in SRC2</div>
<svg class="a" style="left:747.0px;top:472.4px" width="9" height="7"><path d="M.5 5.5L4.5 1.5 8.5 5.5z" fill="#2e7d2e"/></svg>
<div class="a" style="left:638.5px;top:484.9px;width:126.2px;height:38.4px;background:#fff"></div>
<div class="a" style="left:639.5px;top:497.7px;width:124.2px;height:1px;background:#e2e2e2"></div>
<div class="a" style="left:639.5px;top:510.5px;width:124.2px;height:1px;background:#e2e2e2"></div>
<div class="t" style="left:642.30px;top:488.33px;font-size:9.30px;color:#222;transform:scaleX(0.9676);">Risiko</div>
<div class="t" style="left:703.30px;top:488.33px;font-size:9.30px;color:#222;transform:scaleX(0.9152);">EUR 76.000,00</div>
<div class="t" style="left:642.30px;top:501.13px;font-size:9.30px;color:#222;transform:scaleX(0.9780);">Reperaturzeit</div>
<div class="t" style="left:703.30px;top:501.13px;font-size:9.30px;color:#222;transform:scaleX(0.9377);">3h</div>
<div class="t" style="left:642.30px;top:513.93px;font-size:9.30px;color:#222;transform:scaleX(0.9799);">Frequenz</div>
<div class="t" style="left:703.30px;top:513.93px;font-size:9.30px;color:#222;transform:scaleX(1.0891);">Mittel</div>
<svg class="a" style="left:776.9px;top:514.5px" width="11" height="10" viewBox="0 0 11 10"><path d="M1.2 .8h5l3 3.2v5.5h-8.2z" fill="#fff" stroke="#6a6a6a" stroke-width="1.1"/><path d="M6 .8l3.5 3.5h-3.5z" fill="#444"/><path d="M2.8 3.5h2.5M2.8 5.3h3" stroke="#aaa" stroke-width=".8"/><path d="M5.2 9.2l4.5-4.3" stroke="#6a7090" stroke-width="1.6"/></svg>
<div class="a" style="left:617.6px;top:488.0px;width:17px;height:17.2px;background:#fff;border:1px solid #999"></div>
<div class="a" style="left:621.6px;top:492.5px;width:10px;height:9px;background:linear-gradient(135deg,#d0dcf0,#8ea2c8)"></div>
<div class="a" style="left:626.3px;top:531.6px;width:146.7px;height:66.7px;background:#fff;border:1px solid #a0a0a0"></div>
<svg class="a" style="left:643.1px;top:538.4px" width="11.8" height="11.3" viewBox="0 0 12 12" preserveAspectRatio="none"><rect x="0" y="0" width="12" height="12" rx="1.5" fill="url(#gH)"/><text x="6" y="9.6" text-anchor="middle" font-family="Liberation Sans" font-weight="bold" font-size="9.5" fill="#fff">H</text></svg>
<div class="t" style="left:661.50px;top:540.06px;font-size:10.80px;color:#333;transform:scaleX(0.8867);">4. Bruch in ST3</div>
<svg class="a" style="left:747.0px;top:541.1px" width="9" height="7"><path d="M.5 5.5L4.5 1.5 8.5 5.5z" fill="#2e7d2e"/></svg>
<div class="a" style="left:639.5px;top:554.1px;width:124.2px;height:1px;background:#ddd"></div>
<div class="a" style="left:639.5px;top:566.4px;width:124.2px;height:1px;background:#e2e2e2"></div>
<div class="a" style="left:639.5px;top:579.2px;width:124.2px;height:1px;background:#e2e2e2"></div>
<div class="t" style="left:642.30px;top:557.03px;font-size:9.30px;color:#222;transform:scaleX(0.9676);">Risiko</div>
<div class="t" style="left:703.30px;top:557.03px;font-size:9.30px;color:#222;transform:scaleX(0.9152);">EUR 70.000,00</div>
<div class="t" style="left:642.30px;top:569.83px;font-size:9.30px;color:#222;transform:scaleX(0.9780);">Reperaturzeit</div>
<div class="t" style="left:703.30px;top:569.83px;font-size:9.30px;color:#222;transform:scaleX(0.9377);">3h</div>
<div class="t" style="left:642.30px;top:582.63px;font-size:9.30px;color:#222;transform:scaleX(0.9799);">Frequenz</div>
<div class="t" style="left:703.30px;top:582.63px;font-size:9.30px;color:#222;transform:scaleX(1.0081);">Niedrig</div>
<svg class="a" style="left:776.9px;top:583.7px" width="11" height="10" viewBox="0 0 11 10"><path d="M1.2 .8h5l3 3.2v5.5h-8.2z" fill="#fff" stroke="#6a6a6a" stroke-width="1.1"/><path d="M6 .8l3.5 3.5h-3.5z" fill="#444"/><path d="M2.8 3.5h2.5M2.8 5.3h3" stroke="#aaa" stroke-width=".8"/><path d="M5.2 9.2l4.5-4.3" stroke="#6a7090" stroke-width="1.6"/></svg>
<div class="a" style="left:617.6px;top:557.0px;width:17px;height:17.2px;background:#fff;border:1px solid #999"></div>
<div class="a" style="left:621.6px;top:561.5px;width:10px;height:9px;background:linear-gradient(135deg,#d0dcf0,#8ea2c8)"></div>
<div class="a" style="left:855.8px;top:323.6px;width:153.7px;height:66.7px;background:#f6a5c2;border:none"></div>
<svg class="a" style="left:872.6px;top:330.4px" width="11.8" height="11.3" viewBox="0 0 12 12" preserveAspectRatio="none"><rect x="0" y="0" width="12" height="12" rx="1.5" fill="url(#gH)"/><text x="6" y="9.6" text-anchor="middle" font-family="Liberation Sans" font-weight="bold" font-size="9.5" fill="#fff">H</text></svg>
<div class="t" style="left:891.00px;top:332.06px;font-size:10.80px;color:#333;transform:scaleX(0.9370);">1. Verschmutzung</div>
<svg class="a" style="left:994.0px;top:333.1px" width="9" height="7"><path d="M.5 5.5L4.5 1.5 8.5 5.5z" fill="#2e7d2e"/></svg>
<div class="a" style="left:868.0px;top:345.6px;width:133.2px;height:38.4px;background:#fff"></div>
<div class="a" style="left:869.0px;top:358.4px;width:131.2px;height:1px;background:#e2e2e2"></div>
<div class="a" style="left:869.0px;top:371.2px;width:131.2px;height:1px;background:#e2e2e2"></div>
<div class="t" style="left:871.80px;top:349.03px;font-size:9.30px;color:#222;transform:scaleX(0.9676);">Risiko</div>
<div class="t" style="left:932.60px;top:349.03px;font-size:9.30px;color:#222;transform:scaleX(0.9293);">EUR 100.000,00</div>
<div class="t" style="left:871.80px;top:361.83px;font-size:9.30px;color:#222;transform:scaleX(0.9780);">Reperaturzeit</div>
<div class="t" style="left:932.60px;top:361.83px;font-size:9.30px;color:#222;transform:scaleX(1.0054);">3h</div>
<div class="t" style="left:871.80px;top:374.63px;font-size:9.30px;color:#222;transform:scaleX(0.9799);">Frequenz</div>
<div class="t" style="left:932.60px;top:374.63px;font-size:9.30px;color:#222;transform:scaleX(1.0981);">Mittel</div>
<svg class="a" style="left:1014.0px;top:376.5px" width="11" height="10" viewBox="0 0 11 10"><path d="M1.2 .8h5l3 3.2v5.5h-8.2z" fill="#fff" stroke="#6a6a6a" stroke-width="1.1"/><path d="M6 .8l3.5 3.5h-3.5z" fill="#444"/><path d="M2.8 3.5h2.5M2.8 5.3h3" stroke="#aaa" stroke-width=".8"/><path d="M5.2 9.2l4.5-4.3" stroke="#6a7090" stroke-width="1.6"/></svg>
<div class="a" style="left:847.3px;top:348.5px;width:17px;height:17.2px;background:#fff;border:1px solid #999"></div>
<div class="a" style="left:851.3px;top:353.0px;width:10px;height:9px;background:linear-gradient(135deg,#d0dcf0,#8ea2c8)"></div>
<div class="a" style="left:855.8px;top:393.3px;width:149.1px;height:66.3px;background:#fff;border:1px solid #a0a0a0"></div>
<svg class="a" style="left:872.6px;top:400.1px" width="11.8" height="11.3" viewBox="0 0 12 12" preserveAspectRatio="none"><rect x="0" y="0" width="12" height="12" rx="1.5" fill="url(#gM)"/><text x="6" y="9.6" text-anchor="middle" font-family="Liberation Sans" font-weight="bold" font-size="9.5" fill="#fff">M</text></svg>
<div class="t" style="left:891.00px;top:401.76px;font-size:10.80px;color:#333;transform:scaleX(0.9051);">2. Verschleiß</div>
<svg class="a" style="left:989.5px;top:402.8px" width="9" height="7"><path d="M.5 5.5L4.5 1.5 8.5 5.5z" fill="#2e7d2e"/></svg>
<div class="a" style="left:869.0px;top:415.8px;width:126.6px;height:1px;background:#ddd"></div>
<div class="a" style="left:869.0px;top:428.1px;width:126.6px;height:1px;background:#e2e2e2"></div>
<div class="a" style="left:869.0px;top:440.9px;width:126.6px;height:1px;background:#e2e2e2"></div>
<div class="t" style="left:871.80px;top:418.73px;font-size:9.30px;color:#222;transform:scaleX(0.9676);">Risiko</div>
<div class="t" style="left:932.60px;top:418.73px;font-size:9.30px;color:#222;transform:scaleX(0.9262);">EUR 50.000,00</div>
<div class="t" style="left:871.80px;top:431.53px;font-size:9.30px;color:#222;transform:scaleX(0.9780);">Reperaturzeit</div>
<div class="t" style="left:932.60px;top:431.53px;font-size:9.30px;color:#222;transform:scaleX(1.0054);">3h</div>
<div class="t" style="left:871.80px;top:444.33px;font-size:9.30px;color:#222;transform:scaleX(0.9799);">Frequenz</div>
<div class="t" style="left:932.60px;top:444.33px;font-size:9.30px;color:#222;transform:scaleX(1.0981);">Mittel</div>
<svg class="a" style="left:1009.5px;top:445.6px" width="11" height="10" viewBox="0 0 11 10"><path d="M1.2 .8h5l3 3.2v5.5h-8.2z" fill="#fff" stroke="#6a6a6a" stroke-width="1.1"/><path d="M6 .8l3.5 3.5h-3.5z" fill="#444"/><path d="M2.8 3.5h2.5M2.8 5.3h3" stroke="#aaa" stroke-width=".8"/><path d="M5.2 9.2l4.5-4.3" stroke="#6a7090" stroke-width="1.6"/></svg>
<div class="a" style="left:847.3px;top:418.5px;width:17px;height:17.2px;background:#fff;border:1px solid #999"></div>
<div class="a" style="left:851.3px;top:423.0px;width:10px;height:9px;background:linear-gradient(135deg,#d0dcf0,#8ea2c8)"></div>
<div class="a" style="left:843.2px;top:458.7px;width:184.4px;height:72.4px;border:2px solid #3d8fe0;border-radius:3px;background:#fff"></div>
<div class="a" style="left:855.6px;top:462.7px;width:152.0px;height:65.7px;background:#f6a5c2;border:none"></div>
<svg class="a" style="left:872.4px;top:469.5px" width="11.8" height="11.3" viewBox="0 0 12 12" preserveAspectRatio="none"><rect x="0" y="0" width="12" height="12" rx="1.5" fill="url(#gH)"/><text x="6" y="9.6" text-anchor="middle" font-family="Liberation Sans" font-weight="bold" font-size="9.5" fill="#fff">H</text></svg>
<div class="t" style="left:890.80px;top:471.16px;font-size:10.80px;color:#333;transform:scaleX(0.9450);">3. Pneumatik defekt</div>
<svg class="a" style="left:992.0px;top:472.2px" width="9" height="7"><path d="M.5 5.5L4.5 1.5 8.5 5.5z" fill="#2e7d2e"/></svg>
<div class="a" style="left:867.8px;top:484.7px;width:126.5px;height:38.4px;background:#fff"></div>
<div class="a" style="left:868.8px;top:497.5px;width:124.5px;height:1px;background:#e2e2e2"></div>
<div class="a" style="left:868.8px;top:510.3px;width:124.5px;height:1px;background:#e2e2e2"></div>
<div class="a" style="left:868.8px;top:510.3px;width:124.5px;height:13px;background:#d6d6d6"></div>
<div class="t" style="left:871.60px;top:488.13px;font-size:9.30px;color:#222;transform:scaleX(0.9676);">Risiko</div>
<div class="t" style="left:932.80px;top:488.13px;font-size:9.30px;color:#222;transform:scaleX(0.9388);">EUR 80.000,00</div>
<div class="t" style="left:871.60px;top:500.93px;font-size:9.30px;color:#222;transform:scaleX(0.9780);">Reperaturzeit</div>
<div class="t" style="left:932.80px;top:500.93px;font-size:9.30px;color:#222;transform:scaleX(0.9860);">3h</div>
<div class="t" style="left:871.60px;top:513.73px;font-size:9.30px;color:#222;transform:scaleX(0.9799);">Frequenz</div>
<div class="t" style="left:932.80px;top:513.73px;font-size:9.30px;color:#222;transform:scaleX(1.0891);">Mittel</div>
<svg class="a" style="left:1011.4px;top:514.5px" width="11" height="10" viewBox="0 0 11 10"><path d="M1.2 .8h5l3 3.2v5.5h-8.2z" fill="#fff" stroke="#6a6a6a" stroke-width="1.1"/><path d="M6 .8l3.5 3.5h-3.5z" fill="#444"/><path d="M2.8 3.5h2.5M2.8 5.3h3" stroke="#aaa" stroke-width=".8"/><path d="M5.2 9.2l4.5-4.3" stroke="#6a7090" stroke-width="1.6"/></svg>
<div class="a" style="left:847.3px;top:487.3px;width:17px;height:17.2px;background:#fff;border:1px solid #999"></div>
<div class="a" style="left:851.3px;top:491.8px;width:10px;height:9px;background:linear-gradient(135deg,#d0dcf0,#8ea2c8)"></div>
<svg class="a" style="left:830px;top:445px" width="210" height="100">
<rect x="38.5" y="39.5" width="126" height="38.5" fill="none" stroke="#4a90e0" stroke-width="1"/>
<g fill="#fff" stroke="#4a90e0" stroke-width="1.2">
<circle cx="38.5" cy="39.5" r="1.8"/><circle cx="101.8" cy="39.5" r="1.8"/><circle cx="164.5" cy="39.5" r="1.8"/>
<circle cx="38.5" cy="58.8" r="1.8"/><circle cx="164.5" cy="58.8" r="1.8"/>
<circle cx="38.5" cy="78" r="1.8"/><circle cx="101.8" cy="78" r="1.8"/><circle cx="164.5" cy="78" r="1.8"/>
</g>
<g fill="#3d8fe0"><path d="M105.2 6.7l7.5 5.8-7.5 5.8-7.5-5.8z"/><path d="M105.2 81.2l7.5 5.8-7.5 5.8-7.5-5.8z"/><path d="M12.7 41.8l6.0 8.2-6.0 8.2-6.0-8.2z"/><path d="M198.0 41.8l6.0 8.2-6.0 8.2-6.0-8.2z"/></g><g fill="#fff"><path d="M105.2 9.9Q105.2 12.5 107.8 12.5Q105.2 12.5 105.2 15.1Q105.2 12.5 102.6 12.5Q105.2 12.5 105.2 9.9z"/><path d="M105.2 84.4Q105.2 87.0 107.8 87.0Q105.2 87.0 105.2 89.6Q105.2 87.0 102.6 87.0Q105.2 87.0 105.2 84.4z"/><path d="M12.7 47.4Q12.7 50.0 15.3 50.0Q12.7 50.0 12.7 52.6Q12.7 50.0 10.1 50.0Q12.7 50.0 12.7 47.4z"/><path d="M198.0 47.4Q198.0 50.0 200.6 50.0Q198.0 50.0 198.0 52.6Q198.0 50.0 195.4 50.0Q198.0 50.0 198.0 47.4z"/></g>
</svg>
<svg class="a" style="left:900px;top:601px" width="12" height="16"><path d="M1.5 1.5v11l3-2.5 2 4.5 2-1-2-4.2h4z" fill="#fff" stroke="#222" stroke-width="1"/></svg>
<div class="a" style="left:1230px;top:108px;width:13px;height:530px;background:#f3f3f3;border-left:1px solid #e4e4e4"></div>
<div class="a" style="left:1241px;top:107px;width:1px;height:531px;background:#c8c8c8"></div>
<div class="a" style="left:1242px;top:105px;width:17px;height:545px;background:#f0f0f0"></div>
<div class="a" style="left:1243px;top:108px;width:1px;height:540px;background:#a0a0a0"></div>
<div class="a" style="left:1230.5px;top:299.5px;width:10px;height:130.5px;background:linear-gradient(90deg,#dcdcdc,#f4f4f4 50%,#d8d8d8);border:1px solid #c4c4c4;border-radius:2px"></div>
<svg class="a" style="left:1230px;top:108px" width="30" height="530">
<path d="M2.5 7.5l2.5-3 2.5 3z" fill="#333"/>
<path d="M3 262.5h4M3 264.5h4M3 266.5h4" stroke="#777" stroke-width="0.9"/>
</svg>

<svg class="a" style="left:1243px;top:0" width="17" height="682"><rect x="1.5" y="110.5" width="13" height="33.0" rx="2" fill="#f7f7f7" stroke="#b8b8b8" stroke-width="1"/><rect x="1.5" y="147.0" width="13" height="59.0" rx="2" fill="#f7f7f7" stroke="#b8b8b8" stroke-width="1"/><rect x="1.5" y="209.0" width="13" height="54.0" rx="2" fill="#f7f7f7" stroke="#b8b8b8" stroke-width="1"/><rect x="1.5" y="265.0" width="13" height="51.0" rx="2" fill="#f7f7f7" stroke="#b8b8b8" stroke-width="1"/><rect x="1.5" y="317.0" width="13" height="49.0" rx="2" fill="#f7f7f7" stroke="#b8b8b8" stroke-width="1"/><rect x="1.5" y="368.0" width="13" height="38.0" rx="2" fill="#f7f7f7" stroke="#b8b8b8" stroke-width="1"/><rect x="1.5" y="408.0" width="13" height="42.0" rx="2" fill="#f7f7f7" stroke="#b8b8b8" stroke-width="1"/>
<path d="M5 113v7h4M9 113h3v3h-3zM9 118h3v4h-3z" fill="none" stroke="#2b5797" stroke-width="1.2"/>
<circle cx="8" cy="153" r="4" fill="none" stroke="#3a8a3a" stroke-width="1.2"/><path d="M8 151v2.5h2" stroke="#333" stroke-width="0.9" fill="none"/>
<circle cx="8" cy="212" r="2.3" fill="none" stroke="#333" stroke-width="1.1"/><path d="M4 218c0-3 8-3 8 0" fill="none" stroke="#333" stroke-width="1.1"/>
<rect x="4" y="265" width="8" height="8" fill="#fff" stroke="#2b4f8a" stroke-width="1.2"/><path d="M6 268h4M6 270h4" stroke="#2b4f8a"/>
<rect x="4" y="319" width="8" height="8" fill="#fff" stroke="#d08a20" stroke-width="1.2"/><rect x="6" y="321" width="5" height="5" fill="#f0d050"/>
<path d="M4.5 368v7h3v-7zM8.5 368v7h3v-7z" fill="#333"/>
<circle cx="8" cy="412" r="3.3" fill="none" stroke="#333" stroke-width="1.3"/>
</svg>
<div class="a" style="left:2px;top:638px;width:1241px;height:12px;background:#ececec"></div>
<div class="a" style="left:341.5px;top:638.5px;width:617px;height:8.5px;background:linear-gradient(#f8f8f8,#d8d8d8);border:1px solid #c0c0c0;border-radius:2px"></div>
<svg class="a" style="left:0;top:620px" width="1260" height="62">
<path d="M6.5 22.5l2.5-2v4z" fill="#333"/>
<path d="M648 21.5v3.5M650 21.5v3.5M652 21.5v3.5" stroke="#666" stroke-width="0.9"/>
<path d="M1223 22.5l2.5-2v4z" fill="#333" transform="rotate(180 1224.5 22.5)"/>
<rect x="1219.5" y="7" width="10" height="9" fill="#e8e8e8" stroke="#aaa"/>
<path d="M1234 10.5h4.5l-2.25 2.2z" fill="#333"/>
</svg>
<div class="a" style="left:1px;top:649px;width:1242px;height:1px;background:#a8a8a8"></div>
<div class="a" style="left:1px;top:650px;width:1242px;height:14px;background:#f1f1f1"></div>
<div class="a" style="left:1177px;top:650px;width:66px;height:14px;background:#e2e2e2"></div>
<div class="a" style="left:1243px;top:648px;width:16px;height:17px;background:#f0f0f0"></div>
<div class="a" style="left:1058px;top:650px;width:119px;height:14.5px;background:#fff"></div>
<div class="a" style="left:1px;top:664px;width:1258px;height:17px;background:#f0f0f0;border-top:1px solid #e0e0e0"></div>
<div class="a" style="left:0;top:680.5px;width:1260px;height:1.5px;background:#2a2a2a"></div>
<svg class="a" style="left:0;top:648px" width="1260" height="34">
<path d="M7 10.5l3.5-3v6z" fill="#555"/>
<path d="M14 2l10 14" stroke="#c8c8c8" stroke-width="1"/>
<path d="M1233.5 7.5l3 3-3 3z" fill="none" stroke="#999"/>
<rect x="3.5" y="24.5" width="9.5" height="2.3" fill="#3c8a3c"/>
<path d="M73.5 24h4l-2 2.3z" fill="#444"/>
<path d="M163.5 2v14" stroke="#c4c4c4"/><path d="M248.9 2v14" stroke="#c4c4c4"/><path d="M353.7 2v14" stroke="#c4c4c4"/><path d="M439.5 2v14" stroke="#c4c4c4"/><path d="M590.7 2v14" stroke="#c4c4c4"/><path d="M728.3 2v14" stroke="#c4c4c4"/><path d="M875.0 2v14" stroke="#c4c4c4"/><path d="M1001.0 2v14" stroke="#c4c4c4"/>
<path d="M1050 2l8 14" stroke="#c8c8c8"/>
<path d="M1166.5 6l5 5M1171.5 6l-5 5" stroke="#444" stroke-width="1.1"/>
<path d="M1152.5 6.5v5h5" fill="none" stroke="#444" stroke-width="1"/><rect x="1155" y="9" width="3" height="3" fill="#444"/>
</svg>

<svg class="a" style="left:30.5px;top:651.3px" width="11" height="12" viewBox="0 0 12 13"><path d="M.6 .6h7.6l3.2 3.2v8.6h-10.8z" fill="#fff" stroke="#3c4260" stroke-width="1.1"/><path d="M8 .6v3.4h3.4" fill="none" stroke="#3c4260" stroke-width="1"/><path d="M2.5 4.5v5M2.5 7h3M5.5 5v4M9.5 5l-3 2 3 2" fill="none" stroke="#3a4aa0" stroke-width="1.1"/></svg>
<div class="t" style="left:46.20px;top:653.57px;font-size:7.60px;color:#333;-webkit-text-stroke:0.1px currentColor;">Was ist neu in ...018 für Windows</div>
<svg class="a" style="left:170.9px;top:651.3px" width="11" height="12" viewBox="0 0 12 13"><path d="M.6 .6h7.6l3.2 3.2v8.6h-10.8z" fill="#fff" stroke="#3c4260" stroke-width="1.1"/><path d="M8 .6v3.4h3.4" fill="none" stroke="#3c4260" stroke-width="1"/><path d="M2.5 4.5v5M2.5 7h3M5.5 5v4M9.5 5l-3 2 3 2" fill="none" stroke="#3a4aa0" stroke-width="1.1"/></svg>
<div class="t" style="left:186.90px;top:653.57px;font-size:7.60px;color:#333;transform:scaleX(1.0152);-webkit-text-stroke:0.1px currentColor;">Digital Architect*</div>
<svg class="a" style="left:256.3px;top:651.3px" width="11" height="12" viewBox="0 0 12 13"><path d="M.6 .6h7.6l3.2 3.2v8.6h-10.8z" fill="#fff" stroke="#3c4260" stroke-width="1.1"/><path d="M8 .6v3.4h3.4" fill="none" stroke="#3c4260" stroke-width="1"/><path d="M2.5 4.5v5M2.5 7h3M5.5 5v4M9.5 5l-3 2 3 2" fill="none" stroke="#3a4aa0" stroke-width="1.1"/></svg>
<div class="t" style="left:273.50px;top:653.57px;font-size:7.60px;color:#333;transform:scaleX(0.9909);-webkit-text-stroke:0.1px currentColor;">Strategy Toolkit.mmap</div>
<svg class="a" style="left:361.0px;top:651.3px" width="11" height="12" viewBox="0 0 12 13"><path d="M.6 .6h7.6l3.2 3.2v8.6h-10.8z" fill="#fff" stroke="#3c4260" stroke-width="1.1"/><path d="M8 .6v3.4h3.4" fill="none" stroke="#3c4260" stroke-width="1"/><path d="M2.5 4.5v5M2.5 7h3M5.5 5v4M9.5 5l-3 2 3 2" fill="none" stroke="#3a4aa0" stroke-width="1.1"/></svg>
<div class="t" style="left:378.80px;top:653.57px;font-size:7.60px;color:#333;transform:scaleX(0.8675);-webkit-text-stroke:0.1px currentColor;">SWOT ANALYSE*</div>
<svg class="a" style="left:447.3px;top:651.3px" width="11" height="12" viewBox="0 0 12 13"><path d="M.6 .6h7.6l3.2 3.2v8.6h-10.8z" fill="#fff" stroke="#3c4260" stroke-width="1.1"/><path d="M8 .6v3.4h3.4" fill="none" stroke="#3c4260" stroke-width="1"/><path d="M2.5 4.5v5M2.5 7h3M5.5 5v4M9.5 5l-3 2 3 2" fill="none" stroke="#3a4aa0" stroke-width="1.1"/></svg>
<div class="t" style="left:464.30px;top:653.57px;font-size:7.60px;color:#333;transform:scaleX(0.9696);-webkit-text-stroke:0.1px currentColor;">Swimlane - Requ...Execution.mmap*</div>
<svg class="a" style="left:598.3px;top:651.3px" width="11" height="12" viewBox="0 0 12 13"><path d="M.6 .6h7.6l3.2 3.2v8.6h-10.8z" fill="#fff" stroke="#3c4260" stroke-width="1.1"/><path d="M8 .6v3.4h3.4" fill="none" stroke="#3c4260" stroke-width="1"/><path d="M2.5 4.5v5M2.5 7h3M5.5 5v4M9.5 5l-3 2 3 2" fill="none" stroke="#3a4aa0" stroke-width="1.1"/></svg>
<div class="t" style="left:615.00px;top:653.57px;font-size:7.60px;color:#333;transform:scaleX(0.9462);-webkit-text-stroke:0.1px currentColor;">Swimlane - Sales Process.mmap*</div>
<svg class="a" style="left:736.0px;top:651.3px" width="11" height="12" viewBox="0 0 12 13"><path d="M.6 .6h7.6l3.2 3.2v8.6h-10.8z" fill="#fff" stroke="#3c4260" stroke-width="1.1"/><path d="M8 .6v3.4h3.4" fill="none" stroke="#3c4260" stroke-width="1"/><path d="M2.5 4.5v5M2.5 7h3M5.5 5v4M9.5 5l-3 2 3 2" fill="none" stroke="#3a4aa0" stroke-width="1.1"/></svg>
<div class="t" style="left:752.70px;top:653.57px;font-size:7.60px;color:#333;-webkit-text-stroke:0.1px currentColor;">Nächste Schritt...rodukt Roadmap*</div>
<svg class="a" style="left:882.7px;top:651.3px" width="11" height="12" viewBox="0 0 12 13"><path d="M.6 .6h7.6l3.2 3.2v8.6h-10.8z" fill="#fff" stroke="#3c4260" stroke-width="1.1"/><path d="M8 .6v3.4h3.4" fill="none" stroke="#3c4260" stroke-width="1"/><path d="M2.5 4.5v5M2.5 7h3M5.5 5v4M9.5 5l-3 2 3 2" fill="none" stroke="#3a4aa0" stroke-width="1.1"/></svg>
<div class="t" style="left:898.30px;top:653.57px;font-size:7.60px;color:#333;transform:scaleX(0.9251);-webkit-text-stroke:0.1px currentColor;">DASHBOARD WIZARD.mmap</div>
<svg class="a" style="left:1008.3px;top:651.3px" width="11" height="12" viewBox="0 0 12 13"><path d="M.6 .6h7.6l3.2 3.2v8.6h-10.8z" fill="#fff" stroke="#3c4260" stroke-width="1.1"/><path d="M8 .6v3.4h3.4" fill="none" stroke="#3c4260" stroke-width="1"/><path d="M2.5 4.5v5M2.5 7h3M5.5 5v4M9.5 5l-3 2 3 2" fill="none" stroke="#3a4aa0" stroke-width="1.1"/></svg>
<div class="t" style="left:1024.30px;top:653.57px;font-size:7.60px;color:#333;transform:scaleX(0.9471);-webkit-text-stroke:0.1px currentColor;">Projekt C*</div>
<svg class="a" style="left:1070.7px;top:651.3px" width="11" height="12" viewBox="0 0 12 13"><path d="M.6 .6h7.6l3.2 3.2v8.6h-10.8z" fill="#fff" stroke="#3c4260" stroke-width="1.1"/><path d="M8 .6v3.4h3.4" fill="none" stroke="#3c4260" stroke-width="1"/><path d="M2.5 4.5v5M2.5 7h3M5.5 5v4M9.5 5l-3 2 3 2" fill="none" stroke="#3a4aa0" stroke-width="1.1"/></svg>
<div class="t" style="left:1086.70px;top:653.57px;font-size:7.60px;color:#2a5fa8;font-weight:bold;transform:scaleX(0.9601);">Produktionslinie*</div>
<div class="t" style="left:15.20px;top:669.74px;font-size:7.40px;color:#222;font-weight:bold;transform:scaleX(0.9947);-webkit-text-stroke:0;">Mindjet-Dateien</div>
<div class="t" style="left:1103.70px;top:669.57px;font-size:7.60px;color:#333;transform:scaleX(0.9340);">115 %</div>
<svg class="a" style="left:960px;top:665px" width="300" height="16">
<rect x="9" y="3" width="9" height="11" fill="#fff" stroke="#666"/><path d="M11 6h5M11 8.5h5M11 11h3" stroke="#888"/>
<path d="M27 4h10l-4 5v5l-2-1v-4z" fill="#555"/><path d="M39.5 8h3.5l-1.75 2z" fill="#444"/>
<path d="M49 4h10l-4 5v5l-2-1v-4z" fill="#555"/><path d="M60.5 8h3.5l-1.75 2z" fill="#444"/>
<circle cx="78.5" cy="9.5" r="4.5" fill="none" stroke="#555" stroke-width="1.2"/><path d="M78.5 7v5M76 9.5h5" stroke="#555"/>
<path d="M85.5 8h3.5l-1.75 2z" fill="#444"/>
<rect x="93.5" y="4" width="10.5" height="11" fill="#d0d0d0" stroke="#999"/><path d="M95.5 9.5h7M97 6l2 2.5 2-2.5M97 13l2-2.5 2 2.5" stroke="#555" fill="none"/>
<rect x="108.5" y="4" width="10.5" height="11" fill="#f4f4f4" stroke="#999"/><path d="M110.5 6h7M112 8l2 2.5 2-2.5M110.5 13h7" stroke="#555" fill="none"/>
<rect x="124.5" y="4.5" width="10.5" height="10.5" fill="#fff" stroke="#555"/><rect x="124.5" y="4.5" width="10.5" height="2.5" fill="#555"/>
<text x="125.5" y="13.8" font-family="Liberation Sans" font-size="6.5" fill="#444">24</text>
<path d="M175 9.5h5" stroke="#666" stroke-width="1"/>
<path d="M186.5 9.5h57" stroke="#bbb" stroke-width="1"/>
<rect x="215" y="5" width="3" height="10" fill="#eee" stroke="#888" stroke-width=".8"/>
<path d="M250.8 9.5h5M253.3 7v5" stroke="#666" stroke-width="1"/>
<rect x="262" y="4.5" width="9" height="9.5" fill="#fff" stroke="#777"/><path d="M264 7l1.5 1.5M269 7l-1.5 1.5M264 11.5l1.5-1.5M269 11.5l-1.5-1.5" stroke="#777" stroke-width=".8"/>
<rect x="282" y="4" width="8.5" height="11" fill="#555"/><rect x="286.5" y="5" width="3" height="9" fill="#bbb"/>
<path d="M293 8.5h3.5l-1.75 2z" fill="#444"/>
</svg><div class="v" style="left:1253.5px;top:123.7px;transform:rotate(90deg) scaleX(1.050)">Index</div><div class="v" style="left:1253.5px;top:160.7px;transform:rotate(90deg) scaleX(0.994)">Aufgabeninfo</div><div class="v" style="left:1253.5px;top:224.0px;transform:rotate(90deg) scaleX(0.963)">Ressourcen</div><div class="v" style="left:1253.5px;top:279.8px;transform:rotate(90deg) scaleX(0.978)">Map Parts</div><div class="v" style="left:1253.5px;top:330.0px;transform:rotate(90deg) scaleX(1.031)">Bibliothek</div><div class="v" style="left:1253.5px;top:381.7px;transform:rotate(90deg) scaleX(1.029)">Suche</div><div class="v" style="left:1253.5px;top:422.2px;transform:rotate(90deg) scaleX(0.901)">Browser</div>
</body></html>
